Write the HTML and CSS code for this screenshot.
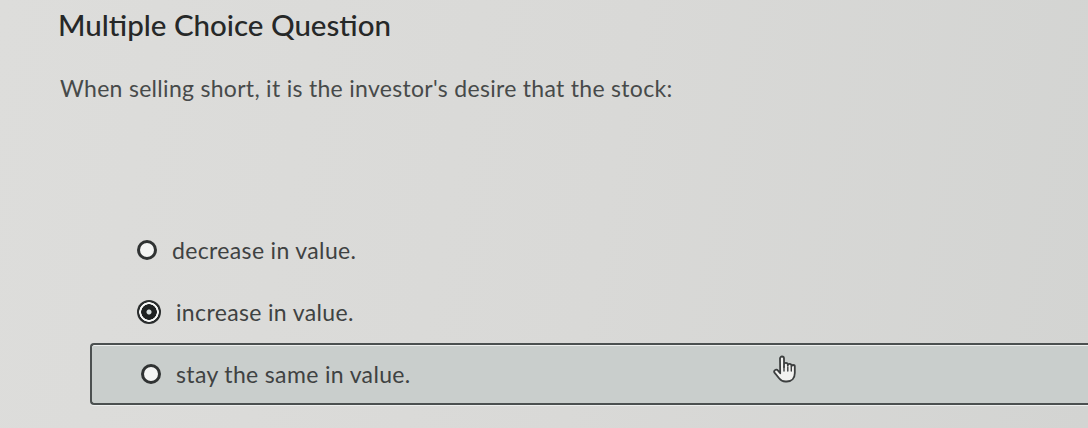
FILE: index.html
```html
<!DOCTYPE html>
<html lang="en">
<head>
    <meta charset="UTF-8">
    <title>Multiple Choice Question</title>
    <link rel="stylesheet" href="styles.css">
</head>
<body>
    <div class="page">
        <h1 class="title">Multiple Choice Question</h1>
        <p class="question">When selling short, it is the investor's desire that the stock:</p>

        <ul class="choices">
            <li class="choice">
                <span class="radio"></span>
                <span class="label">decrease in value.</span>
            </li>
            <li class="choice">
                <span class="radio checked"></span>
                <span class="label">increase in value.</span>
            </li>
            <li class="choice hover">
                <span class="radio"></span>
                <span class="label">stay the same in value.</span>
                <!-- mouse pointer over the row -->
                <svg class="pointer" width="24" height="30" viewBox="0 0 24 30">
                    <path d="M7 3.5c0-1.2 1-2 2-2s2 .8 2 2v8.5l0-2.5c0-1 .9-1.7 1.9-1.7s1.9.7 1.9 1.7v1c0-1 .8-1.6 1.8-1.6s1.8.6 1.8 1.6v1c0-.9.8-1.5 1.7-1.5s1.7.6 1.7 1.5v6.5c0 5-3 8.5-8 8.5h-1.5c-2.6 0-4.4-1-6-3l-4.6-5.6c-.7-.9-.6-2.1.3-2.8s2.1-.6 2.8.3l2.4 2.8z"
                          fill="#f2f2f0" stroke="#3c3f3f" stroke-width="1.8" stroke-linejoin="round"/>
                    <path d="M11 12v4M14.8 12v4M18.3 12.5v3.5" stroke="#3c3f3f" stroke-width="1.4" stroke-linecap="round"/>
                </svg>
            </li>
        </ul>
    </div>
</body>
</html>
```

FILE: styles.css
```css
* {
    margin: 0;
    padding: 0;
    box-sizing: border-box;
}
body {
    font-family: Lato, 'Open Sans', sans-serif;
    background: linear-gradient(100deg, #dddddb 0%, #d9d9d7 55%, #d3d4d2 100%);
    color: #3a3c3c;
    height: 100vh;
    overflow: hidden;
}
.page {
    padding: 7px 0 0 58px;
}
.title {
    font-size: 29.5px;
    line-height: 36px;
    font-weight: 500;
    color: #262828;
}
.question {
    margin-top: 30px;
    padding-left: 2px;
    font-size: 23px;
    line-height: 30px;
    letter-spacing: 0.3px;
    color: #474a4a;
}
.choices {
    list-style-type: none;
    margin: 116px 0 0 32px;
}
.choice {
    display: flex;
    align-items: center;
    gap: 15px;
    height: 62px;
    padding-left: 47px;
    font-size: 23px;
    letter-spacing: 0.35px;
    color: #3f4242;
    position: relative;
}
.choice.hover {
    margin-right: -12px;
    padding-left: 49px;
    background-color: #c9cecc;
    border: 2px solid #4b5050;
    border-right: none;
    border-radius: 4px 0 0 4px;
    box-shadow: 0 1px 0 #eef0ef, inset 0 1px 0 #eef0ef;
}
.radio {
    width: 20px;
    height: 20px;
    border: 3px solid #303333;
    border-radius: 50%;
    background-color: #f4f5f4;
    flex-shrink: 0;
}
.radio.checked {
    width: 24px;
    height: 24px;
    border: none;
    background: radial-gradient(circle, #d9e0e0 0 2px, #1f2222 3px 7.5px, #f6f7f6 8px 9.5px, #2a2d2d 10px);
}
.pointer {
    position: absolute;
    left: 681px;
    top: 10px;
}
```
